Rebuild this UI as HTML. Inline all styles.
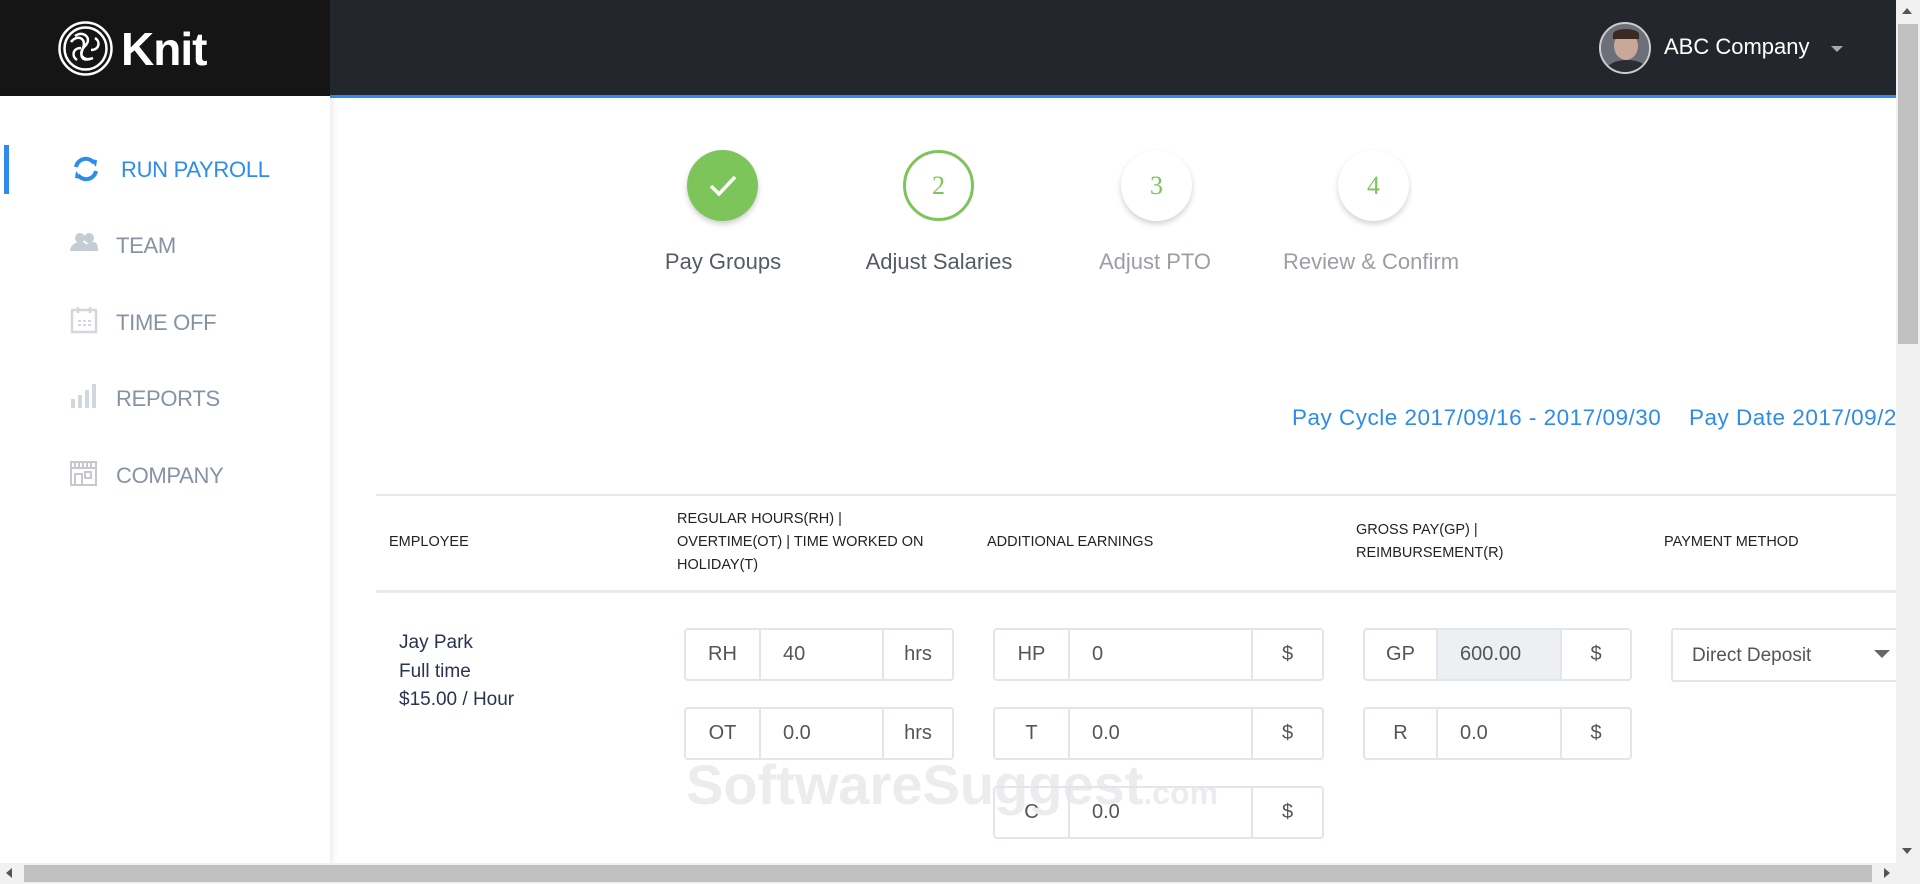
<!DOCTYPE html>
<html><head><meta charset="utf-8"><style>
*{box-sizing:border-box;margin:0;padding:0}
body{width:1920px;height:884px;overflow:hidden;background:#fff;font-family:"Liberation Sans",Arial,sans-serif;position:relative}
.abs{position:absolute}
.hdr{left:0;top:0;width:1896px;height:96px;background:#23262d}
.logo{left:0;top:0;width:330px;height:96px;background:#151515}
.blue{left:330px;top:95px;width:1566px;height:3px;background:#2d8ceb}
.side{left:0;top:96px;width:330px;height:767px;background:#fff;box-shadow:3px 0 6px rgba(0,0,0,.08)}
.nav{position:absolute;left:116px;font-size:22px;color:#8793a3;letter-spacing:-0.3px}
.ico{position:absolute;left:70px}
.step{position:absolute;width:71px;height:71px;border-radius:50%;top:150px;display:flex;align-items:center;justify-content:center;font-family:"Liberation Serif",serif;font-size:26px;color:#7dc55a;background:#fff;box-shadow:0 3px 6px rgba(0,0,0,.18)}
.lbl{position:absolute;top:249px;font-size:22px;transform:translateX(-50%);white-space:nowrap}
.th{position:absolute;font-size:14.5px;color:#222;line-height:23px}
.grp{position:absolute;height:53px;border:2px solid #e1e5ec;border-radius:4px;display:flex;font-size:20px;color:#555}
.grp div{display:flex;align-items:center;height:100%}
.a{justify-content:center;border-right:2px solid #e1e5ec;color:#555}
.b{padding-left:22px;color:#555}
.c{justify-content:center;border-left:2px solid #e1e5ec}
</style></head><body>
<div class="abs hdr"></div>
<div class="abs logo"></div>
<svg class="abs" style="left:57px;top:20px" width="57" height="57" viewBox="0 0 57 57"><g fill="none" stroke="#fff" stroke-width="2.5"><circle cx="28.5" cy="28.5" r="26"/><circle cx="28.5" cy="28.5" r="21"/><path d="M18 16c8-6 18 2 10 10s-2 16 8 12M14 22c6-8 16-4 12 6s0 14 10 10M20 40c-6-4-4-12 4-12M38 18c6 4 4 12-4 12"/></g></svg>
<div class="abs" style="left:121px;top:22px;font-size:46px;font-weight:bold;color:#fff;letter-spacing:-1px">Knit</div>
<div class="abs" style="left:1599px;top:22px;width:52px;height:52px;border-radius:50%;background:#6a6f78;border:2px solid #ccc;overflow:hidden"><div style="position:absolute;left:13px;top:8px;width:24px;height:28px;border-radius:50%;background:#c9a89a"></div><div style="position:absolute;left:4px;top:36px;width:44px;height:24px;border-radius:50%;background:#2a2d33"></div><div style="position:absolute;left:12px;top:5px;width:26px;height:10px;border-radius:50% 50% 0 0;background:#3a2a22"></div></div>
<div class="abs" style="left:1664px;top:34px;font-size:22px;color:#fff">ABC Company</div>
<div class="abs" style="left:1831px;top:46px;border-left:6px solid transparent;border-right:6px solid transparent;border-top:6px solid #aaa"></div>
<div class="abs blue"></div>
<div class="abs side">
<div class="abs" style="left:4px;top:49px;width:5px;height:49px;background:#2d8ceb"></div>
<svg class="ico" style="top:59px;left:72px" width="28" height="28" viewBox="0 0 28 28"><g fill="none" stroke="#2d8ceb" stroke-width="4"><path d="M4 12a10 10 0 0 1 18-4"/><path d="M24 16a10 10 0 0 1-18 4"/></g><path d="M18 4l7 1-1 7z M10 24l-7-1 1-7z" fill="#2d8ceb"/></svg>
<div class="nav" style="top:61px;left:121px;color:#2d8ceb">RUN PAYROLL</div>
<svg class="ico" style="top:136px" width="28" height="20" viewBox="0 0 28 20"><g fill="#c5ccd5"><circle cx="10" cy="6" r="5"/><circle cx="19" cy="6" r="5"/><path d="M0 19c1-7 6-9 10-9s9 2 10 9zM14 19c1-7 5-9 9-9s5 3 5 9z"/></g></svg>
<div class="nav" style="top:137px">TEAM</div>
<svg class="ico" style="top:210px" width="28" height="28" viewBox="0 0 28 28"><g fill="none" stroke="#d2d7de" stroke-width="2.5"><rect x="2" y="4" width="24" height="22"/><path d="M8 1v6M20 1v6"/></g><g fill="#d2d7de"><rect x="8" y="14" width="3" height="2"/><rect x="13" y="14" width="3" height="2"/><rect x="18" y="14" width="3" height="2"/><rect x="8" y="18" width="3" height="2"/><rect x="13" y="18" width="3" height="2"/><rect x="18" y="18" width="3" height="2"/></g></svg>
<div class="nav" style="top:214px">TIME OFF</div>
<svg class="ico" style="top:286px" width="26" height="26" viewBox="0 0 26 26"><g fill="#d2d7de"><rect x="1" y="17" width="4" height="9"/><rect x="8" y="13" width="4" height="13"/><rect x="15" y="8" width="4" height="18"/><rect x="22" y="2" width="4" height="24"/></g></svg>
<div class="nav" style="top:290px">REPORTS</div>
<svg class="ico" style="top:363px" width="27" height="27" viewBox="0 0 27 27"><g fill="none" stroke="#c5c9cf" stroke-width="2"><rect x="1" y="3" width="25" height="23"/><path d="M1 9h25M5 3v6M9 3v6M13 3v6M17 3v6M21 3v6"/><rect x="5" y="15" width="7" height="11"/><rect x="15" y="13" width="6" height="6"/></g></svg>
<div class="nav" style="top:367px">COMPANY</div>
</div>
<div class="step" style="left:687px;background:#7dc55a;box-shadow:0 3px 6px rgba(0,0,0,.2)"><svg width="30" height="24" viewBox="0 0 30 24"><path d="M3 12l8 8L27 3" fill="none" stroke="#fff" stroke-width="3.5"/></svg></div>
<div class="step" style="left:903px;border:3px solid #7dc55a;box-shadow:none">2</div>
<div class="step" style="left:1121px">3</div>
<div class="step" style="left:1338px">4</div>
<div class="lbl" style="left:723px;color:#555b66">Pay Groups</div>
<div class="lbl" style="left:939px;color:#555b66">Adjust Salaries</div>
<div class="lbl" style="left:1155px;color:#9a9ea5">Adjust PTO</div>
<div class="lbl" style="left:1371px;color:#9a9ea5">Review &amp; Confirm</div>
<div class="abs" style="left:1292px;top:405px;font-size:22.5px;letter-spacing:0.5px;color:#2d8ceb;white-space:nowrap">Pay Cycle 2017/09/16 - 2017/09/30</div>
<div class="abs" style="left:1689px;top:405px;width:207px;overflow:hidden;font-size:22.5px;letter-spacing:0.5px;color:#2d8ceb;white-space:nowrap">Pay Date 2017/09/29</div>
<div class="abs" style="left:376px;top:494px;width:1520px;height:2px;background:#e6e8eb"></div>
<div class="th" style="left:389px;top:531px">EMPLOYEE</div>
<div class="th" style="left:677px;top:508px">REGULAR HOURS(RH) |<br>OVERTIME(OT) | TIME WORKED ON<br>HOLIDAY(T)</div>
<div class="th" style="left:987px;top:531px">ADDITIONAL EARNINGS</div>
<div class="th" style="left:1356px;top:519px">GROSS PAY(GP) |<br>REIMBURSEMENT(R)</div>
<div class="th" style="left:1664px;top:531px">PAYMENT METHOD</div>
<div class="abs" style="left:376px;top:590px;width:1520px;height:3px;background:#e8ebef"></div>
<div class="abs" style="left:399px;top:629px;font-size:19px;color:#2a3350;line-height:28.5px">Jay Park<br>Full time<br>$15.00 / Hour</div>
<div class="abs" style="left:686px;top:752px;font-size:56px;font-weight:bold;color:#ececee;white-space:nowrap">SoftwareSuggest<span style="font-size:32px">.com</span></div>
<div class="grp" style="left:684px;top:628px;width:270px"><div class="a" style="width:75px">RH</div><div class="b" style="width:121px">40</div><div class="c" style="flex:1">hrs</div></div>
<div class="grp" style="left:684px;top:707px;width:270px"><div class="a" style="width:75px">OT</div><div class="b" style="width:121px">0.0</div><div class="c" style="flex:1">hrs</div></div>
<div class="grp" style="left:993px;top:628px;width:331px"><div class="a" style="width:75px">HP</div><div class="b" style="width:181px">0</div><div class="c" style="flex:1">$</div></div>
<div class="grp" style="left:993px;top:707px;width:331px"><div class="a" style="width:75px">T</div><div class="b" style="width:181px">0.0</div><div class="c" style="flex:1">$</div></div>
<div class="grp" style="left:993px;top:786px;width:331px"><div class="a" style="width:75px">C</div><div class="b" style="width:181px">0.0</div><div class="c" style="flex:1">$</div></div>
<div class="grp" style="left:1363px;top:628px;width:269px"><div class="a" style="width:73px">GP</div><div class="b" style="width:122px;background:#eeeff1">600.00</div><div class="c" style="flex:1">$</div></div>
<div class="grp" style="left:1363px;top:707px;width:269px"><div class="a" style="width:73px">R</div><div class="b" style="width:122px">0.0</div><div class="c" style="flex:1">$</div></div>
<div class="abs" style="left:1671px;top:628px;width:240px;height:54px;border:2px solid #e1e5ec;border-radius:3px;font-size:19px;color:#555;padding:15px 0 0 19px">Direct Deposit</div>
<div class="abs" style="left:1874px;top:650px;border-left:8px solid transparent;border-right:8px solid transparent;border-top:8px solid #666"></div>
<div class="abs" style="left:1896px;top:0;width:24px;height:863px;background:#f1f1f1"></div>
<div class="abs" style="left:1898px;top:24px;width:20px;height:320px;background:#c1c1c1"></div>
<div class="abs" style="left:1902px;top:8px;border-left:5px solid transparent;border-right:5px solid transparent;border-bottom:6px solid #555"></div>
<div class="abs" style="left:1902px;top:848px;border-left:5px solid transparent;border-right:5px solid transparent;border-top:6px solid #555"></div>
<div class="abs" style="left:0;top:863px;width:1920px;height:21px;background:#f1f1f1"></div>
<div class="abs" style="left:24px;top:865px;width:1848px;height:17px;background:#c1c1c1"></div>
<div class="abs" style="left:6px;top:868px;border-top:5px solid transparent;border-bottom:5px solid transparent;border-right:6px solid #555"></div>
<div class="abs" style="left:1884px;top:868px;border-top:5px solid transparent;border-bottom:5px solid transparent;border-left:6px solid #555"></div>
</body></html>
